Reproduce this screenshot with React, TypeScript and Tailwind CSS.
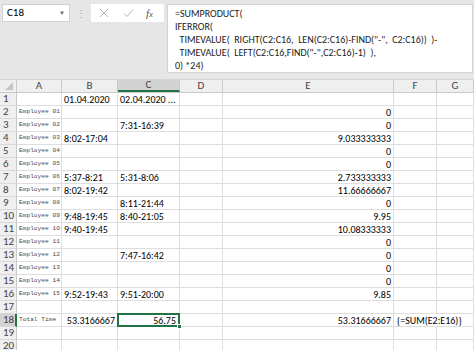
import React from 'react';

type Row = {
  n: number;
  a?: string;
  b?: string;
  c?: string;
  e?: string;
};

const rows: Row[] = [
  { n: 1, b: '01.04.2020', c: '02.04.2020 ...' },
  { n: 2, a: 'Employee 01', e: '0' },
  { n: 3, a: 'Employee 02', c: '7:31-16:39', e: '0' },
  { n: 4, a: 'Employee 03', b: '8:02-17:04', e: '9.033333333' },
  { n: 5, a: 'Employee 04', e: '0' },
  { n: 6, a: 'Employee 05', e: '0' },
  { n: 7, a: 'Employee 06', b: '5:37-8:21', c: '5:31-8:06', e: '2.733333333' },
  { n: 8, a: 'Employee 07', b: '8:02-19:42', e: '11.66666667' },
  { n: 9, a: 'Employee 08', c: '8:11-21:44', e: '0' },
  { n: 10, a: 'Employee 09', b: '9:48-19:45', c: '8:40-21:05', e: '9.95' },
  { n: 11, a: 'Employee 10', b: '9:40-19:45', e: '10.08333333' },
  { n: 12, a: 'Employee 11', e: '0' },
  { n: 13, a: 'Employee 12', c: '7:47-16:42', e: '0' },
  { n: 14, a: 'Employee 13', e: '0' },
  { n: 15, a: 'Employee 14', e: '0' },
  { n: 16, a: 'Employee 15', b: '9:52-19:43', c: '9:51-20:00', e: '9.85' },
  { n: 17 },
];

const cellFont = { fontFamily: "Carlito, 'Liberation Sans Narrow', 'Open Sans', sans-serif" };

const cols = ['A', 'B', 'C', 'D', 'E', 'F', 'G'];
const colW = ['w-[45px]', 'w-[56px]', 'w-[62px]', 'w-[43px]', 'w-[171px]', 'w-[43px]', 'flex-1'];

const Mono: React.FC<{ children: React.ReactNode }> = ({ children }) => (
  <span className="text-[6.2px] text-[#4a4a4a] whitespace-nowrap" style={{ fontFamily: "'Liberation Mono', monospace" }}>
    {children}
  </span>
);

const RowHead: React.FC<{ n: number; active?: boolean }> = ({ n, active }) => (
  <div
    className={`w-[17px] shrink-0 h-full flex items-center pl-[3px] text-[11px] text-[#444] border-b border-[#d9d9d9] ${
      active ? 'bg-[#d3d3d3] border-r-2 border-r-[#217346]' : 'bg-[#efefef] border-r border-r-[#c9c9c9]'
    }`}
  >
    {n}
  </div>
);

const Cell: React.FC<{ w: string; right?: boolean; noBorderR?: boolean; children?: React.ReactNode }> = ({
  w,
  right,
  noBorderR,
  children,
}) => (
  <div
    className={`${w} shrink-0 h-full flex items-center px-[2px] border-b border-[#dedede] whitespace-nowrap ${
      noBorderR ? '' : 'border-r'
    } ${right ? 'justify-end' : ''}`}
  >
    {children}
  </div>
);

export default function App() {
  return (
    <div className="w-[474px] h-[350px] overflow-hidden bg-white text-black" style={cellFont}>
      {/* Formula bar */}
      <div className="h-[80px] bg-[#e6e6e6] flex items-start pt-[4px] pl-[2px] gap-0 border-b border-[#d4d4d4]">
        <div className="w-[68px] h-[18px] bg-white border border-[#d0d0d0] flex items-center justify-between px-[4px] text-[11px]">
          <span>C18</span>
          <span className="text-[6px] text-[#666]">▼</span>
        </div>
        <div className="w-[21px] h-[18px] flex items-center justify-center text-[10px] text-[#a8a8a8]">⋮</div>
        <div className="w-[73px] h-[18px] bg-white flex items-center text-[#b0b0b0]">
          <svg width="10" height="10" viewBox="0 0 10 10" className="ml-[8px]">
            <path d="M1 1 L9 9 M9 1 L1 9" stroke="#b4b4b4" strokeWidth="1" fill="none" />
          </svg>
          <svg width="11" height="10" viewBox="0 0 11 10" className="ml-[14px]">
            <path d="M1 5.5 L4 8.5 L10 1.5" stroke="#b4b4b4" strokeWidth="1" fill="none" />
          </svg>
          <span
            className="ml-[12px] text-[11px] italic text-[#555]"
            style={{ fontFamily: "'Liberation Serif', serif" }}
          >
            f<span className="text-[9px]">x</span>
          </span>
        </div>
        <div
          className="ml-[3px] mr-[1px] flex-1 h-[69px] bg-white border border-[#d4d4d4] pl-[7px] pt-[2px] text-[10px] leading-[13px] text-[#222] whitespace-pre"
        >
          {'=SUMPRODUCT(\nIFERROR(\n  TIMEVALUE(  RIGHT(C2:C16,  LEN(C2:C16)-FIND("-",  C2:C16))  )-\n  TIMEVALUE(  LEFT(C2:C16,FIND("-",C2:C16)-1)  ),\n0) *24)'}
        </div>
      </div>

      {/* Column headers */}
      <div className="h-[13px] flex bg-[#efefef] border-b border-[#c9c9c9] text-[11px] text-[#444]">
        <div className="w-[17px] shrink-0 h-full border-r border-[#c9c9c9] flex items-end justify-end pr-[3px] pb-[2px]">
          <div className="w-0 h-0 border-l-[8px] border-l-transparent border-b-[8px] border-b-[#c4c4c4]" />
        </div>
        {cols.map((c, i) => (
          <div
            key={c}
            className={`${colW[i]} shrink-0 h-full flex items-center justify-center ${
              c === 'C' ? 'bg-[#d3d3d3] border-b-2 border-b-[#217346] border-r border-r-[#c9c9c9]' : 'border-r border-r-[#c9c9c9]'
            }`}
          >
            {c}
          </div>
        ))}
      </div>

      {/* Data rows */}
      {rows.map((r) => (
        <div key={r.n} className="h-[13px] flex text-[10px]">
          <RowHead n={r.n} />
          <Cell w={colW[0]}>{r.a && <Mono>{r.a}</Mono>}</Cell>
          <Cell w={colW[1]}>{r.b}</Cell>
          <Cell w={colW[2]}>{r.c}</Cell>
          <Cell w={colW[3]} />
          <Cell w={colW[4]} right>
            {r.e}
          </Cell>
          <Cell w={colW[5]} />
          <Cell w={colW[6]} />
        </div>
      ))}

      {/* Row 18 totals */}
      <div className="h-[13px] flex text-[10px]">
        <RowHead n={18} active />
        <Cell w={colW[0]}>
          <Mono>Total Time</Mono>
        </Cell>
        <Cell w={colW[1]} right>
          53.3166667
        </Cell>
        <div className="w-[62px] shrink-0 h-full relative border-b border-[#dedede] border-r">
          <div className="absolute -left-[1px] -top-[1px] right-[-1px] bottom-[-1px] border-2 border-[#217346] flex items-center justify-end pr-[2px]">
            56.75
          </div>
          <div className="absolute right-[-3px] bottom-[-3px] w-[5px] h-[5px] bg-[#217346] border border-white" />
        </div>
        <Cell w={colW[3]} />
        <Cell w={colW[4]} right>
          53.31666667
        </Cell>
        <Cell w={colW[5]} noBorderR>
          <span className="pl-[1px]">{'{=SUM(E2:E16)}'}</span>
        </Cell>
        <Cell w={colW[6]} />
      </div>

      {[19, 20].map((n) => (
        <div key={n} className="h-[13px] flex text-[10px]">
          <RowHead n={n} />
          {colW.map((w, i) => (
            <Cell key={i} w={w} />
          ))}
        </div>
      ))}
    </div>
  );
}
